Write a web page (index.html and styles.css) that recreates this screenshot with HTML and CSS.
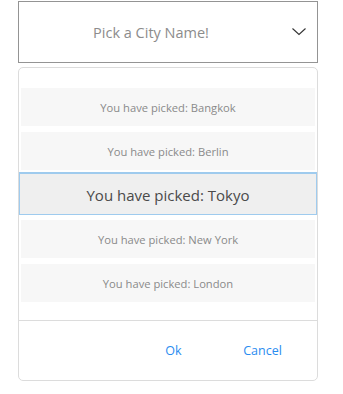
FILE: index.html
```html
<!DOCTYPE html>
<html>
<head>
    <meta charset='utf-8'>
    <title>City Picker</title>
    <meta name='viewport' content='width=device-width, initial-scale=1'>
    <link rel="stylesheet" href="styles.css">
</head>
<body>
<div id="page">
    <div id="picker">
        <span id="pickerText">Pick a City Name!</span>
        <span id="pickerArrow">
            <svg width="14" height="8" viewBox="0 0 14 8">
                <polyline points="0.5,0.5 7,6.5 13.5,0.5" fill="none" stroke="#333" stroke-width="1.1"/>
            </svg>
        </span>
    </div>
    <div id="popup">
        <div id="list">
            <div class="item">You have picked: Bangkok</div>
            <div class="item">You have picked: Berlin</div>
            <div class="item selected">You have picked: Tokyo</div>
            <div class="item">You have picked: New York</div>
            <div class="item">You have picked: London</div>
        </div>
        <div id="buttons">
            <div class="btn">Ok</div>
            <div class="btn">Cancel</div>
        </div>
    </div>
</div>
</body>
</html>
```

FILE: styles.css
```css
html, body {
    margin: 0;
    padding: 0;
    background-color: white;
    font-family: "Open Sans", "Noto Sans", sans-serif;
}

#page {
    width: 300px;
    padding: 1px 0 0 18px;
}

#picker {
    display: flex;
    align-items: center;
    height: 60px;
    border: 1px solid #949494;
}

#pickerText {
    flex: 1;
    text-align: center;
    font-size: 14.5px;
    color: #8c8c8c;
}

#pickerArrow {
    display: flex;
    width: 32px;
    padding-right: 2px;
    justify-content: center;
}

#popup {
    margin-top: 4px;
    height: 312px;
    border: 1px solid #dcdcdc;
    border-radius: 5px;
    display: flex;
    flex-direction: column;
}

#list {
    display: flex;
    flex-direction: column;
    padding: 20px 0 18px 0;
    border-bottom: 1px solid #dcdcdc;
}

.item {
    display: flex;
    align-items: center;
    justify-content: center;
    height: 38px;
    margin: 0 2px 6px 2px;
    background-color: #f7f7f7;
    font-size: 11.2px;
    color: #8a8a8a;
}

.item.selected {
    height: 40px;
    margin: -4px 0 5px 0;
    padding-top: 2px;
    box-sizing: border-box;
    height: 43px;
    border: 1px solid #9fcbee;
    border-top-width: 2px;
    background-color: #efefef;
    font-size: 15px;
    color: #4a4a4a;
}

.item:last-child {
    margin-bottom: 0;
}

#buttons {
    flex: 1;
    display: flex;
    align-items: center;
    justify-content: flex-end;
    padding-right: 10px;
}

.btn {
    width: 89px;
    text-align: center;
    font-size: 12.5px;
    color: #2a8cf0;
}
```
